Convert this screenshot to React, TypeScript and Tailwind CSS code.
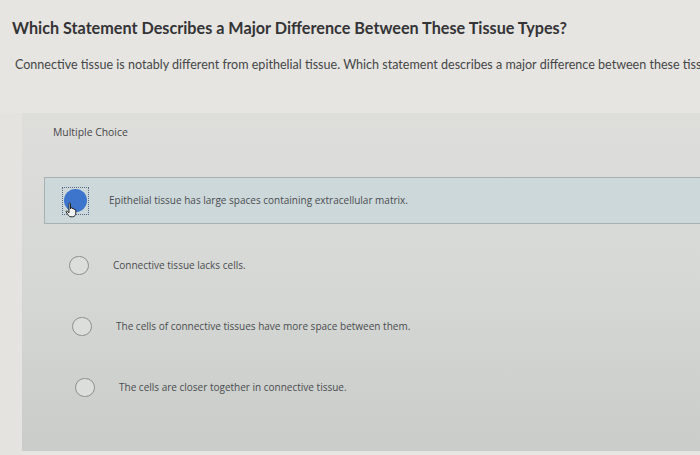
import React from "react";

function Radio() {
  return (
    <div className="w-[20px] h-[19px] rounded-full border-[1.5px] border-[#8d8f8e] bg-[#dcdedb] shrink-0" />
  );
}

function SelectedRadio() {
  return (
    <div className="relative w-[27px] h-[28px] shrink-0 border border-dotted border-[#5a6a8a] flex items-center justify-center">
      <div className="w-[23px] h-[23px] rounded-full bg-[#3d74cc]" />
      <svg
        className="absolute left-[2px] top-[14px]"
        width="14"
        height="16"
        viewBox="0 0 14 16"
      >
        <path
          d="M4 1.5 C4 0.7 5.5 0.7 5.5 1.5 L5.5 7 L6 6 C6.2 5.3 7.5 5.4 7.5 6.2 L7.6 7 C7.8 6.3 9.1 6.4 9.1 7.2 L9.2 7.8 C9.4 7.2 10.8 7.3 10.8 8.1 L10.8 11 C10.8 13 9.6 14.8 7.6 14.8 L6 14.8 C4.6 14.8 3.8 14 3 12.8 L1.2 10 C0.8 9.3 1.6 8.6 2.3 9.2 L4 10.8 Z"
          fill="#f3f3f3"
          stroke="#222"
          strokeWidth="1"
          strokeLinejoin="round"
        />
      </svg>
    </div>
  );
}

const optFont = { fontFamily: "'Open Sans', Arial, sans-serif" };

export default function App() {
  return (
    <div
      className="w-[700px] h-[455px] overflow-hidden bg-[#e6e5e1] text-[#3b3b3d] flex flex-col"
      style={{ fontFamily: "Lato, 'Open Sans', Arial, sans-serif" }}
    >
      <div className="pt-[17px] pl-[12px] h-[113px]">
        <h1 className="text-[16.2px] leading-[22px] font-bold text-[#343436] whitespace-nowrap">
          Which Statement Describes a Major Difference Between These Tissue Types?
        </h1>
        <p className="mt-[17px] pl-[3px] text-[12.55px] leading-[18px] text-[#454547] whitespace-nowrap">
          Connective tissue is notably different from epithelial tissue. Which statement describes a major difference between these tissue types?
        </p>
      </div>
      <div className="flex-1 flex">
        <div className="w-[22px] bg-[#e4e3df]" />
        <div className="flex-1 flex flex-col bg-gradient-to-b from-[#dededb] via-[#d6d8d5] to-[#c9ccc8] mb-[4px]">
          <div className="pl-[31px] pt-[12px] text-[10.4px] leading-[14px] text-[#47474a]" style={optFont}>
            Multiple Choice
          </div>
          <div className="mt-[38px] ml-[22px] h-[47px] bg-[#cdd8da] border-y border-l border-[#a7b0b3] flex items-center pl-[17px]" style={optFont}>
            <SelectedRadio />
            <span className="ml-[20px] text-[10px] text-[#4a4c50]">
              Epithelial tissue has large spaces containing extracellular matrix.
            </span>
          </div>
          <div className="mt-[25px] h-[32px] flex items-center pl-[47px]" style={optFont}>
            <Radio />
            <span className="ml-[24px] text-[10px] text-[#4a4c50]">Connective tissue lacks cells.</span>
          </div>
          <div className="mt-[29px] h-[32px] flex items-center pl-[50px]" style={optFont}>
            <Radio />
            <span className="ml-[24px] text-[10px] text-[#4a4c50]">
              The cells of connective tissues have more space between them.
            </span>
          </div>
          <div className="mt-[29px] h-[32px] flex items-center pl-[53px]" style={optFont}>
            <Radio />
            <span className="ml-[24px] text-[10px] text-[#4a4c50]">
              The cells are closer together in connective tissue.
            </span>
          </div>
        </div>
      </div>
    </div>
  );
}
